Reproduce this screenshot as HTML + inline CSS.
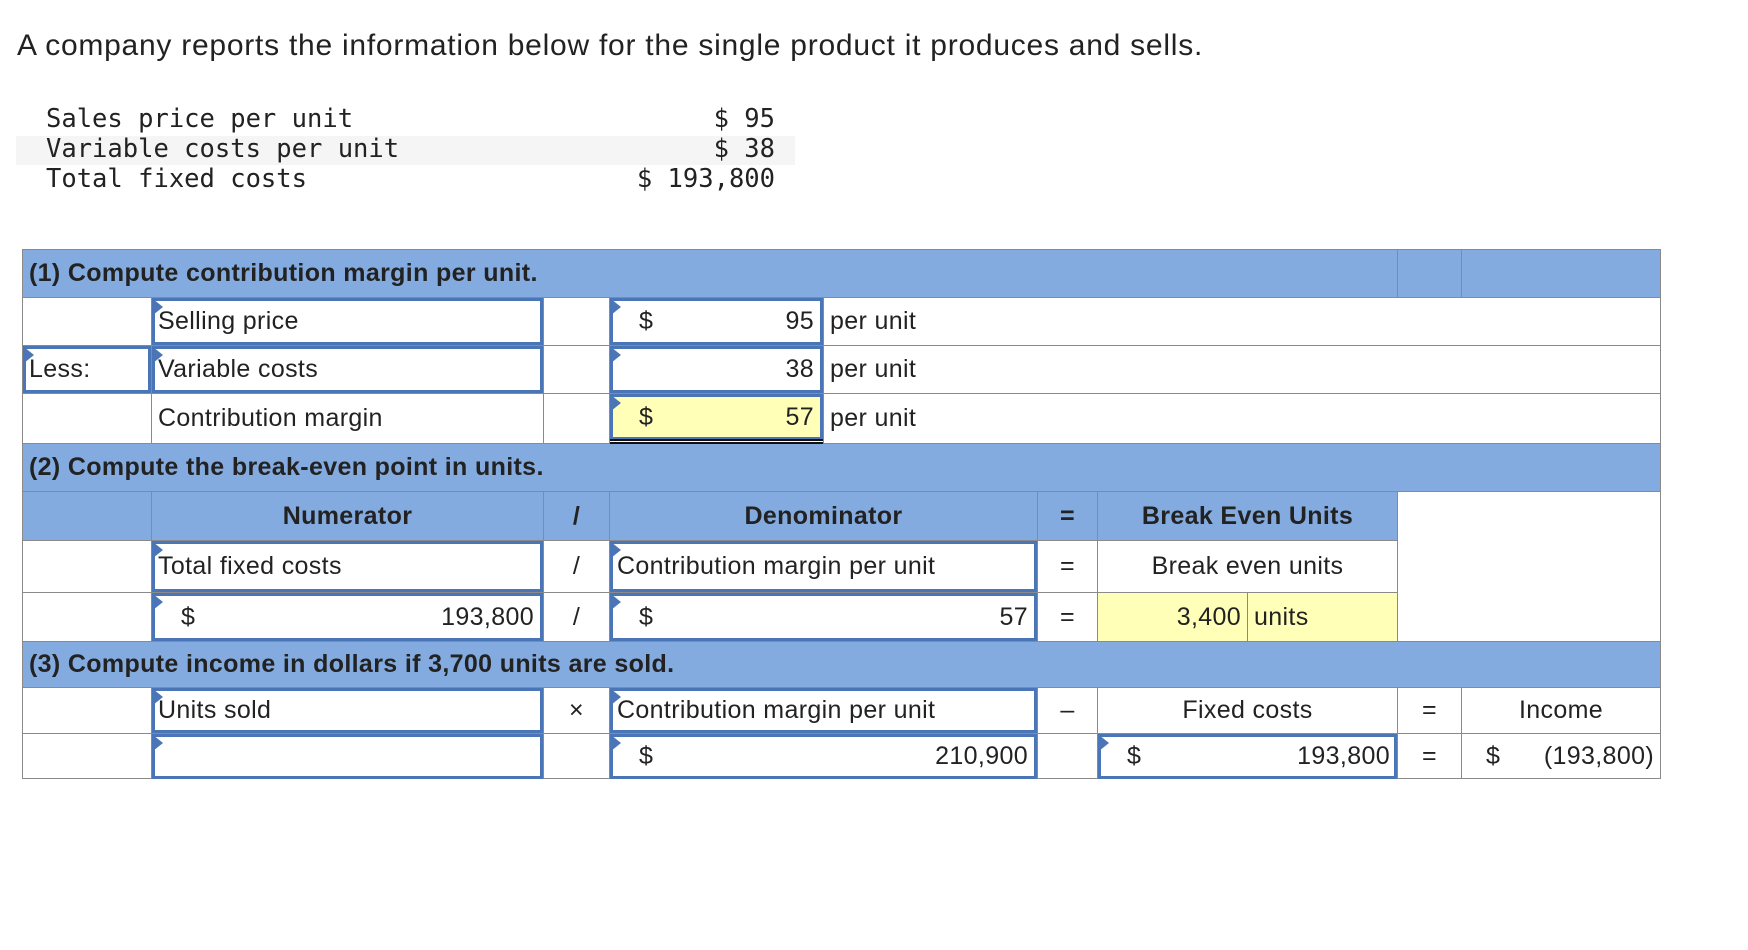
<!DOCTYPE html>
<html><head><meta charset="utf-8"><style>
body{margin:0;width:1748px;height:950px;background:#fff;position:relative;overflow:hidden;font-family:"Liberation Sans",Arial,sans-serif;color:#222}
.t{position:absolute;left:17px;top:29px;font-size:30px;letter-spacing:0.75px;white-space:nowrap;color:#222}
.m{position:absolute;font-family:"DejaVu Sans Mono","Liberation Mono",monospace;font-size:25.5px;white-space:pre;color:#222}
.r{text-align:right;width:400px}
.c{position:absolute;box-sizing:border-box;border:1px solid #8a8a8a;display:flex;align-items:center;font-size:25px;letter-spacing:0.35px;white-space:nowrap;background:#fff;padding:0 6px}
.b{background:#84ABDF;font-weight:bold}
.ctr{justify-content:center}
.y{background:#FFFFB8}
.in{position:absolute;box-sizing:border-box;border:3px solid #4A76B8;display:flex;align-items:center;font-size:25px;letter-spacing:0.35px;white-space:nowrap;padding:0 3px}
.tri:before{content:"";position:absolute;left:-2px;top:-2px;border-left:10px solid #4A76B8;border-top:8px solid transparent;border-bottom:8px solid transparent}
.sp{flex:1}
</style></head><body>
<div class="t">A company reports the information below for the single product it produces and sells.</div>
<div style="position:absolute;left:16px;top:136px;width:779px;height:29px;background:#f5f5f5"></div>
<div class="m" style="left:46px;top:104px">Sales price per unit</div>
<div class="m" style="left:46px;top:134px">Variable costs per unit</div>
<div class="m" style="left:46px;top:164px">Total fixed costs</div>
<div class="m r" style="left:375px;top:104px">$ 95</div>
<div class="m r" style="left:375px;top:134px">$ 38</div>
<div class="m r" style="left:375px;top:164px">$ 193,800</div>

<div style="position:absolute;left:22px;top:249px;width:1639px;height:530px;border:1px solid #8a8a8a;box-sizing:border-box"></div>

<!-- R0 -->
<div class="c b" style="left:22px;top:249px;width:1376px;height:49px">(1) Compute contribution margin per unit.</div>
<div class="c b" style="left:1397px;top:249px;width:65px;height:49px"></div>
<div class="c b" style="left:1461px;top:249px;width:200px;height:49px"></div>
<!-- R1 -->
<div class="c" style="left:22px;top:297px;width:130px;height:49px"></div>
<div class="c" style="left:151px;top:297px;width:393px;height:49px"></div>
<div class="c" style="left:543px;top:297px;width:67px;height:49px"></div>
<div class="c" style="left:609px;top:297px;width:215px;height:49px"></div>
<div class="c" style="left:823px;top:297px;width:838px;height:49px">per unit</div>
<!-- R2 -->
<div class="c" style="left:22px;top:345px;width:130px;height:49px"></div>
<div class="c" style="left:151px;top:345px;width:393px;height:49px"></div>
<div class="c" style="left:543px;top:345px;width:67px;height:49px"></div>
<div class="c" style="left:609px;top:345px;width:215px;height:49px"></div>
<div class="c" style="left:823px;top:345px;width:838px;height:49px">per unit</div>
<!-- R3 -->
<div class="c" style="left:22px;top:393px;width:130px;height:51px"></div>
<div class="c" style="left:151px;top:393px;width:393px;height:51px">Contribution margin</div>
<div class="c" style="left:543px;top:393px;width:67px;height:51px"></div>
<div class="c" style="left:609px;top:393px;width:215px;height:51px"></div>
<div class="c" style="left:823px;top:393px;width:838px;height:51px">per unit</div>
<!-- R4 -->
<div class="c b" style="left:22px;top:443px;width:1639px;height:49px">(2) Compute the break-even point in units.</div>
<!-- R5 -->
<div class="c b" style="left:22px;top:491px;width:130px;height:50px"></div>
<div class="c b ctr" style="left:151px;top:491px;width:393px;height:50px">Numerator</div>
<div class="c b ctr" style="left:543px;top:491px;width:67px;height:50px">/</div>
<div class="c b ctr" style="left:609px;top:491px;width:429px;height:50px">Denominator</div>
<div class="c b ctr" style="left:1037px;top:491px;width:61px;height:50px">=</div>
<div class="c b ctr" style="left:1097px;top:491px;width:301px;height:50px">Break Even Units</div>
<div class="c" style="left:1397px;top:491px;width:264px;height:151px"></div>
<!-- R6 -->
<div class="c" style="left:22px;top:540px;width:130px;height:53px"></div>
<div class="c" style="left:151px;top:540px;width:393px;height:53px"></div>
<div class="c ctr" style="left:543px;top:540px;width:67px;height:53px">/</div>
<div class="c" style="left:609px;top:540px;width:429px;height:53px"></div>
<div class="c ctr" style="left:1037px;top:540px;width:61px;height:53px">=</div>
<div class="c ctr" style="left:1097px;top:540px;width:301px;height:53px">Break even units</div>
<!-- R7 -->
<div class="c" style="left:22px;top:592px;width:130px;height:50px"></div>
<div class="c" style="left:151px;top:592px;width:393px;height:50px"></div>
<div class="c ctr" style="left:543px;top:592px;width:67px;height:50px">/</div>
<div class="c" style="left:609px;top:592px;width:429px;height:50px"></div>
<div class="c ctr" style="left:1037px;top:592px;width:61px;height:50px">=</div>
<div class="c y" style="left:1097px;top:592px;width:151px;height:50px;justify-content:flex-end">3,400</div>
<div class="c y" style="left:1247px;top:592px;width:151px;height:50px">units</div>
<!-- R8 -->
<div class="c b" style="left:22px;top:641px;width:1639px;height:47px">(3) Compute income in dollars if 3,700 units are sold.</div>
<!-- R9 -->
<div class="c" style="left:22px;top:687px;width:130px;height:47px"></div>
<div class="c" style="left:151px;top:687px;width:393px;height:47px"></div>
<div class="c ctr" style="left:543px;top:687px;width:67px;height:47px">×</div>
<div class="c" style="left:609px;top:687px;width:429px;height:47px"></div>
<div class="c ctr" style="left:1037px;top:687px;width:61px;height:47px">–</div>
<div class="c ctr" style="left:1097px;top:687px;width:301px;height:47px">Fixed costs</div>
<div class="c ctr" style="left:1397px;top:687px;width:65px;height:47px">=</div>
<div class="c ctr" style="left:1461px;top:687px;width:200px;height:47px">Income</div>
<!-- R10 -->
<div class="c" style="left:22px;top:733px;width:130px;height:46px"></div>
<div class="c" style="left:151px;top:733px;width:393px;height:46px"></div>
<div class="c" style="left:543px;top:733px;width:67px;height:46px"></div>
<div class="c" style="left:609px;top:733px;width:429px;height:46px"></div>
<div class="c" style="left:1037px;top:733px;width:61px;height:46px"></div>
<div class="c" style="left:1097px;top:733px;width:301px;height:46px"></div>
<div class="c ctr" style="left:1397px;top:733px;width:65px;height:46px">=</div>
<div class="c" style="left:1461px;top:733px;width:200px;height:46px;padding:0 6px 0 24px">$<span class="sp"></span>(193,800)</div>

<!-- inputs -->
<div class="in tri" style="left:152px;top:298px;width:391px;height:47px">Selling price</div>
<div class="in tri" style="left:610px;top:298px;width:213px;height:47px;padding:0 6px 0 26px">$<span class="sp"></span>95</div>
<div class="in tri" style="left:23px;top:346px;width:128px;height:47px">Less:</div>
<div class="in tri" style="left:152px;top:346px;width:391px;height:47px">Variable costs</div>
<div class="in tri" style="left:610px;top:346px;width:213px;height:47px;padding:0 6px">&nbsp;<span class="sp"></span>38</div>
<div class="in tri y" style="left:610px;top:394px;width:213px;height:46px;padding:0 6px 0 26px">$<span class="sp"></span>57</div>
<div style="position:absolute;left:610px;top:439px;width:213px;height:5px;border-top:2px solid #111;border-bottom:2px solid #111;box-sizing:border-box"></div>
<div class="in tri" style="left:152px;top:541px;width:391px;height:51px">Total fixed costs</div>
<div class="in tri" style="left:610px;top:541px;width:427px;height:51px;padding:0 4px">Contribution margin per unit</div>
<div class="in tri" style="left:152px;top:593px;width:391px;height:48px;padding:0 6px 0 26px">$<span class="sp"></span>193,800</div>
<div class="in tri" style="left:610px;top:593px;width:427px;height:48px;padding:0 6px 0 26px">$<span class="sp"></span>57</div>
<div class="in tri" style="left:152px;top:688px;width:391px;height:45px">Units sold</div>
<div class="in tri" style="left:610px;top:688px;width:427px;height:45px;padding:0 4px">Contribution margin per unit</div>
<div class="in tri" style="left:152px;top:734px;width:391px;height:45px"></div>
<div class="in tri" style="left:610px;top:734px;width:427px;height:45px;padding:0 6px 0 26px">$<span class="sp"></span>210,900</div>
<div class="in tri" style="left:1098px;top:734px;width:299px;height:45px;padding:0 4px 0 26px">$<span class="sp"></span>193,800</div>
</body></html>
